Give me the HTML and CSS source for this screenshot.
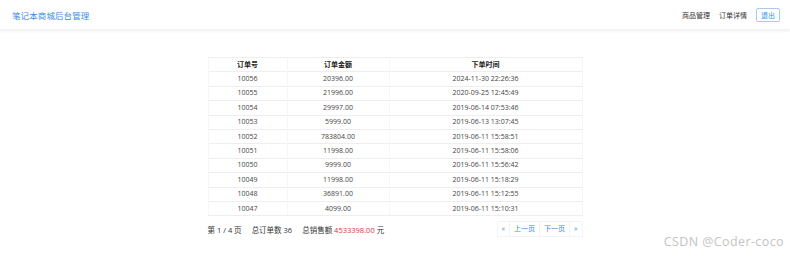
FILE: index.html
```html
<!DOCTYPE html>
<html lang="zh-CN">

<head>
          <meta charset="UTF-8">
          <meta name="viewport" content="width=device-width, initial-scale=1.0">
          <title>笔记本商城后台管理</title>
          <link rel="stylesheet" href="styles.css">
</head>

<body>
          <div class="navbar">
                    <a class="brand" href="#">笔记本商城后台管理</a>
                    <div class="nav-links">
                              <a class="nav-link" href="#">商品管理</a>
                              <a class="nav-link" href="#">订单详情</a>
                              <button class="btn-logout">退出</button>
                    </div>
          </div>

          <div class="container">
                    <table class="orders">
                              <thead>
                                        <tr>
                                                  <th class="col-id">订单号</th>
                                                  <th class="col-amount">订单金额</th>
                                                  <th>下单时间</th>
                                        </tr>
                              </thead>
                              <tbody>
                                        <tr><td>10056</td><td>20396.00</td><td>2024-11-30 22:26:36</td></tr>
                                        <tr><td>10055</td><td>21996.00</td><td>2020-09-25 12:45:49</td></tr>
                                        <tr><td>10054</td><td>29997.00</td><td>2019-06-14 07:53:46</td></tr>
                                        <tr><td>10053</td><td>5999.00</td><td>2019-06-13 13:07:45</td></tr>
                                        <tr><td>10052</td><td>783804.00</td><td>2019-06-11 15:58:51</td></tr>
                                        <tr><td>10051</td><td>11998.00</td><td>2019-06-11 15:58:06</td></tr>
                                        <tr><td>10050</td><td>9999.00</td><td>2019-06-11 15:56:42</td></tr>
                                        <tr><td>10049</td><td>11998.00</td><td>2019-06-11 15:18:29</td></tr>
                                        <tr><td>10048</td><td>36891.00</td><td>2019-06-11 15:12:55</td></tr>
                                        <tr><td>10047</td><td>4099.00</td><td>2019-06-11 15:10:31</td></tr>
                              </tbody>
                    </table>

                    <div class="summary">
                              <div class="stats">
                                        <span>第 1 / 4 页</span>
                                        <span>总订单数 36</span>
                                        <span>总销售额 <em class="total">4533398.00</em> 元</span>
                              </div>
                              <ul class="pager">
                                        <li><a href="#">«</a></li>
                                        <li><a href="#">上一页</a></li>
                                        <li><a href="#">下一页</a></li>
                                        <li><a href="#">»</a></li>
                              </ul>
                    </div>
          </div>

          <div class="watermark">CSDN @Coder-coco</div>
</body>

</html>
```

FILE: styles.css
```css
body {
          margin: 0;
          background-color: #ffffff;
          color: #333333;
          font-family: "Open Sans", "Noto Sans CJK SC", sans-serif;
}

a {
          text-decoration: none;
}

.navbar {
          display: flex;
          align-items: center;
          justify-content: space-between;
          height: 29px;
          padding: 0 10px 0 12px;
          background-color: #ffffff;
          box-shadow: 0 1px 3px rgba(0, 0, 0, 0.07);
          border-bottom: 1px solid #f2f2f2;
}

.brand {
          font-size: 8.5px;
          color: #3a8ee6;
          letter-spacing: 0.1px;
}

.nav-links {
          display: flex;
          align-items: center;
          gap: 9px;
}

.nav-link {
          font-size: 7px;
          color: #333333;
}

.btn-logout {
          height: 14px;
          padding: 0 4px;
          font-family: inherit;
          font-size: 7px;
          color: #3a8ee6;
          background-color: #ffffff;
          border: 1px solid #a9c9ee;
          border-radius: 2px;
}

.container {
          width: 375px;
          margin: 27px auto 0;
}

.orders {
          width: 100%;
          border-collapse: collapse;
          font-size: 7px;
          table-layout: fixed;
          color: #444444;
}

.orders th,
.orders td {
          height: 13.4px;
          padding: 0;
          line-height: 12px;
          text-align: center;
          border-top: 1px solid #eeeeee;
          border-left: 1px solid #f6f6f6;
          border-right: 1px solid #f6f6f6;
}

.orders th {
          font-weight: bold;
          color: #222222;
}

.orders tbody tr:last-child td {
          border-bottom: 1px solid #eeeeee;
}

.col-id {
          width: 78px;
}

.col-amount {
          width: 101px;
}

.summary {
          display: flex;
          align-items: center;
          justify-content: space-between;
          margin-top: 5px;
}

.stats {
          display: flex;
          gap: 10px;
          font-size: 7.5px;
          color: #333333;
}

.total {
          font-style: normal;
          color: #d9363e;
}

.pager {
          display: flex;
          margin: 0;
          padding: 0;
          list-style: none;
}

.pager a {
          display: block;
          height: 14px;
          line-height: 14px;
          padding: 0 4px;
          font-size: 7px;
          color: #3a8ee6;
          border: 1px solid #f3f3f3;
          margin-left: -1px;
}

.watermark {
          position: absolute;
          right: 6px;
          top: 233px;
          font-size: 12.5px;
          letter-spacing: 0.4px;
          color: #c4c4c4;
}
```
